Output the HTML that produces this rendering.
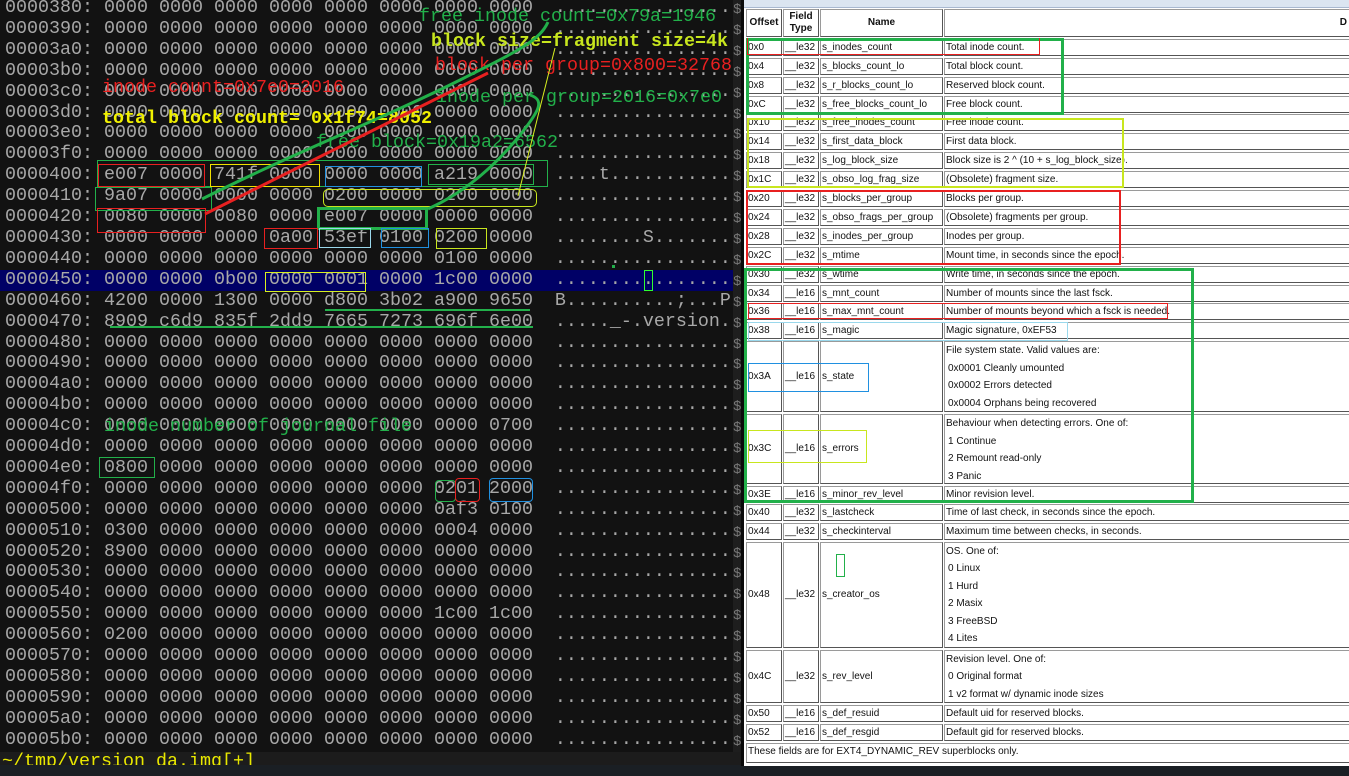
<!DOCTYPE html>
<html><head><meta charset="utf-8">
<style>
*{margin:0;padding:0;box-sizing:border-box}
body{width:1349px;height:776px;overflow:hidden;background:#1a1f24;position:relative;font-family:"Liberation Sans",Arial,sans-serif}
#term{position:absolute;left:0;top:0;width:733px;height:752px;background:#121212;overflow:hidden}
#hex{position:absolute;left:5px;top:-2px;font-family:"Liberation Mono",monospace;font-size:18.33px;line-height:20.9px;color:#a8a8a8;white-space:pre;letter-spacing:0}
.hl{position:absolute;left:0;top:270px;width:733px;height:21px;background:#000066}
#strip{position:absolute;left:733px;top:0;width:8px;height:752px;background:#1e1e1e;color:#777;font-family:"Liberation Mono",monospace;font-size:14px;line-height:20.9px;overflow:hidden}
#status{position:absolute;left:0;top:752px;width:741px;height:13px;background:#1c1c1c;color:#e8e800;font-family:"Liberation Mono",monospace;font-size:18.33px;line-height:20px;padding-left:2px;overflow:hidden}
#right{position:absolute;left:741px;top:0;width:608px;height:766px;background:#fff;border-left:3px solid #0a0a0a;overflow:hidden}
.topbar{position:absolute;left:0;top:0;width:608px;height:8px;background:#dbe5f1;border-bottom:1px solid #a8b8d0}
.row{position:absolute;left:0;width:700px;font-size:10px;color:#111}
.c{position:absolute;top:1px;bottom:1px;border:1px solid #9a9a9a;border-right-color:#555;border-bottom-color:#555;padding-left:1px;line-height:16px;overflow:hidden;white-space:nowrap}
.c1{left:2px;width:36px}.c2{left:39px;width:36px;padding-left:1px}.c3{left:76px;width:123px}.c4{left:200px;width:520px}
.hd .c{font-weight:bold;text-align:center;padding:0;white-space:normal}
.mid{display:flex;align-items:center}
.ln{line-height:17.5px;padding-left:2px}
.b{position:absolute;border-style:solid}
.t{position:absolute;font-family:"Liberation Mono",monospace;font-size:18.33px;white-space:pre;line-height:20px}
</style></head><body>
<div id="term">
<div class="hl"></div>
<div id="hex">0000380: 0000 0000 0000 0000 0000 0000 0000 0000  ................
0000390: 0000 0000 0000 0000 0000 0000 0000 0000  ................
00003a0: 0000 0000 0000 0000 0000 0000 0000 0000  ................
00003b0: 0000 0000 0000 0000 0000 0000 0000 0000  ................
00003c0: 0000 0000 0000 0000 0000 0000 0000 0000  ................
00003d0: 0000 0000 0000 0000 0000 0000 0000 0000  ................
00003e0: 0000 0000 0000 0000 0000 0000 0000 0000  ................
00003f0: 0000 0000 0000 0000 0000 0000 0000 0000  ................
0000400: e007 0000 741f 0000 0000 0000 a219 0000  ....t...........
0000410: 9a07 0000 0000 0000 0200 0000 0200 0000  ................
0000420: 0080 0000 0080 0000 e007 0000 0000 0000  ................
0000430: 0000 0000 0000 0a00 53ef 0100 0200 0000  ........S.......
0000440: 0000 0000 0000 0000 0000 0000 0100 0000  ................
0000450: 0000 0000 0b00 0000 0001 0000 1c00 0000  ................
0000460: 4200 0000 1300 0000 d800 3b02 a900 9650  B..........;...P
0000470: 8909 c6d9 835f 2dd9 7665 7273 696f 6e00  ....._-.version.
0000480: 0000 0000 0000 0000 0000 0000 0000 0000  ................
0000490: 0000 0000 0000 0000 0000 0000 0000 0000  ................
00004a0: 0000 0000 0000 0000 0000 0000 0000 0000  ................
00004b0: 0000 0000 0000 0000 0000 0000 0000 0000  ................
00004c0: 0000 0000 0000 0000 0000 0000 0000 0700  ................
00004d0: 0000 0000 0000 0000 0000 0000 0000 0000  ................
00004e0: 0800 0000 0000 0000 0000 0000 0000 0000  ................
00004f0: 0000 0000 0000 0000 0000 0000 0201 2000  ................
0000500: 0000 0000 0000 0000 0000 0000 0af3 0100  ................
0000510: 0300 0000 0000 0000 0000 0000 0004 0000  ................
0000520: 8900 0000 0000 0000 0000 0000 0000 0000  ................
0000530: 0000 0000 0000 0000 0000 0000 0000 0000  ................
0000540: 0000 0000 0000 0000 0000 0000 0000 0000  ................
0000550: 0000 0000 0000 0000 0000 0000 1c00 1c00  ................
0000560: 0200 0000 0000 0000 0000 0000 0000 0000  ................
0000570: 0000 0000 0000 0000 0000 0000 0000 0000  ................
0000580: 0000 0000 0000 0000 0000 0000 0000 0000  ................
0000590: 0000 0000 0000 0000 0000 0000 0000 0000  ................
00005a0: 0000 0000 0000 0000 0000 0000 0000 0000  ................
00005b0: 0000 0000 0000 0000 0000 0000 0000 0000  ................</div>

<div class="t" style="left:419px;top:7px;color:#22b04a">free inode count=0x79a=1946</div>
<div class="t" style="left:431px;top:32px;color:#c8e61e;font-weight:bold">block size=fragment size=4k</div>
<div class="t" style="left:435px;top:56px;color:#e82020">block per group=0x800=32768</div>
<div class="t" style="left:102px;top:78px;color:#e82020">inode count=0x7e0=2016</div>
<div class="t" style="left:436px;top:88px;color:#22b04a">inode per group=2016=0x7e0</div>
<div class="t" style="left:102px;top:109px;color:#f0f000;font-weight:bold">total block count= 0x1f74=8052</div>
<div class="t" style="left:316px;top:133px;color:#22b04a">free block=0x19a2=6562</div>
<div class="t" style="left:104px;top:417px;color:#22b04a">inode number of journal file</div>

<div class="b" style="left:97px;top:160px;width:451px;height:27px;border-width:1px;border-color:#22b04a"></div>
<div class="b" style="left:98px;top:164px;width:107px;height:23px;border-width:1px;border-color:#e82020"></div>
<div class="b" style="left:210px;top:164px;width:110px;height:23px;border-width:1px;border-color:#f0e000"></div>
<div class="b" style="left:325px;top:166px;width:97px;height:21px;border-width:1px;border-color:#2090e0"></div>
<div class="b" style="left:428px;top:164px;width:106px;height:21px;border-width:1px;border-color:#22b04a"></div>
<div class="b" style="left:95px;top:187px;width:117px;height:24px;border-width:1px;border-color:#22b04a"></div>
<div class="b" style="left:323px;top:189px;width:214px;height:18px;border-width:1px;border-color:#c8e61e;border-radius:5px"></div>
<div class="b" style="left:97px;top:208px;width:109px;height:25px;border-width:1px;border-color:#e82020"></div>
<div class="b" style="left:317px;top:207px;width:111px;height:23px;border-width:3px;border-color:#22b04a"></div>
<div class="b" style="left:264px;top:228px;width:54px;height:21px;border-width:1px;border-color:#e82020"></div>
<div class="b" style="left:319px;top:228px;width:52px;height:20px;border-width:1px;border-color:#9ad8ec"></div>
<div class="b" style="left:381px;top:228px;width:48px;height:20px;border-width:1px;border-color:#2090e0"></div>
<div class="b" style="left:436px;top:228px;width:51px;height:21px;border-width:1px;border-color:#c8e61e"></div>
<div class="b" style="left:265px;top:272px;width:101px;height:20px;border-width:1px;border-color:#d8f020"></div>
<div class="b" style="left:644px;top:270px;width:9px;height:21px;border-width:1px;border-color:#30ff30"></div>
<div class="b" style="left:612px;top:265px;width:3px;height:3px;background:#22b04a;border-width:0"></div>
<div class="b" style="left:325px;top:309px;width:205px;height:0;border-width:2px 0 0;border-color:#22b04a"></div>
<div class="b" style="left:110px;top:326px;width:423px;height:0;border-width:2px 0 0;border-color:#22b04a"></div>
<div class="b" style="left:99px;top:457px;width:56px;height:21px;border-width:1px;border-color:#22b04a"></div>
<div class="b" style="left:435px;top:480px;width:21px;height:22px;border-width:1px;border-color:#22b04a;border-radius:4px"></div>
<div class="b" style="left:455px;top:478px;width:25px;height:24px;border-width:1px;border-color:#e82020;border-radius:4px"></div>
<div class="b" style="left:489px;top:478px;width:44px;height:24px;border-width:1px;border-color:#2090e0;border-radius:4px"></div>

<svg style="position:absolute;left:0;top:0" width="733" height="300">
<path d="M202,199 C300,150 380,120 460,80 C520,50 540,40 548,22" stroke="#22b04a" stroke-width="3" fill="none"/>
<path d="M205,214 L488,73" stroke="#e82020" stroke-width="3" fill="none"/>
<path d="M428,209 C470,190 500,160 520,135 C540,110 545,100 530,95" stroke="#22b04a" stroke-width="3" fill="none"/>
<path d="M555,48 L518,196" stroke="#d8f020" stroke-width="1" fill="none"/>
</svg>
</div>
<div id="strip">$<br>$<br>$<br>$<br>$<br>$<br>$<br>$<br>$<br>$<br>$<br>$<br>$<br>$<br>$<br>$<br>$<br>$<br>$<br>$<br>$<br>$<br>$<br>$<br>$<br>$<br>$<br>$<br>$<br>$<br>$<br>$<br>$<br>$<br>$<br>$</div>
<div id="status">~/tmp/version_da.img[+]</div>

<div id="right">
<div class="topbar"></div>
<div class="row hd" style="top:8px;height:30px"><div class="c c1 mid" style="justify-content:center">Offset</div><div class="c c2" style="line-height:12px;padding-top:1px">Field Type</div><div class="c c3 mid" style="justify-content:center">Name</div><div class="c c4" style="line-height:26px;text-align:right;padding-right:116px">D</div></div>

<div class="row" style="top:38px;height:19px"><div class="c c1">0x0</div><div class="c c2">__le32</div><div class="c c3">s_inodes_count</div><div class="c c4">Total inode count.</div></div>
<div class="row" style="top:57px;height:19px"><div class="c c1">0x4</div><div class="c c2">__le32</div><div class="c c3">s_blocks_count_lo</div><div class="c c4">Total block count.</div></div>
<div class="row" style="top:76px;height:19px"><div class="c c1">0x8</div><div class="c c2">__le32</div><div class="c c3">s_r_blocks_count_lo</div><div class="c c4">Reserved block count.</div></div>
<div class="row" style="top:95px;height:19px"><div class="c c1">0xC</div><div class="c c2">__le32</div><div class="c c3">s_free_blocks_count_lo</div><div class="c c4">Free block count.</div></div>
<div class="row" style="top:113px;height:19px"><div class="c c1">0x10</div><div class="c c2">__le32</div><div class="c c3">s_free_inodes_count</div><div class="c c4">Free inode count.</div></div>
<div class="row" style="top:132px;height:19px"><div class="c c1">0x14</div><div class="c c2">__le32</div><div class="c c3">s_first_data_block</div><div class="c c4">First data block.</div></div>
<div class="row" style="top:151px;height:19px"><div class="c c1">0x18</div><div class="c c2">__le32</div><div class="c c3">s_log_block_size</div><div class="c c4">Block size is 2 ^ (10 + s_log_block_size).</div></div>
<div class="row" style="top:170px;height:19px"><div class="c c1">0x1C</div><div class="c c2">__le32</div><div class="c c3">s_obso_log_frag_size</div><div class="c c4">(Obsolete) fragment size.</div></div>
<div class="row" style="top:189px;height:19px"><div class="c c1">0x20</div><div class="c c2">__le32</div><div class="c c3">s_blocks_per_group</div><div class="c c4">Blocks per group.</div></div>
<div class="row" style="top:208px;height:19px"><div class="c c1">0x24</div><div class="c c2">__le32</div><div class="c c3">s_obso_frags_per_group</div><div class="c c4">(Obsolete) fragments per group.</div></div>
<div class="row" style="top:227px;height:19px"><div class="c c1">0x28</div><div class="c c2">__le32</div><div class="c c3">s_inodes_per_group</div><div class="c c4">Inodes per group.</div></div>
<div class="row" style="top:246px;height:19px"><div class="c c1">0x2C</div><div class="c c2">__le32</div><div class="c c3">s_mtime</div><div class="c c4">Mount time, in seconds since the epoch.</div></div>
<div class="row" style="top:265px;height:19px"><div class="c c1">0x30</div><div class="c c2">__le32</div><div class="c c3">s_wtime</div><div class="c c4">Write time, in seconds since the epoch.</div></div>
<div class="row" style="top:284px;height:19px"><div class="c c1">0x34</div><div class="c c2">__le16</div><div class="c c3">s_mnt_count</div><div class="c c4">Number of mounts since the last fsck.</div></div>
<div class="row" style="top:302px;height:19px"><div class="c c1">0x36</div><div class="c c2">__le16</div><div class="c c3">s_max_mnt_count</div><div class="c c4">Number of mounts beyond which a fsck is needed.</div></div>
<div class="row" style="top:321px;height:19px"><div class="c c1">0x38</div><div class="c c2">__le16</div><div class="c c3">s_magic</div><div class="c c4">Magic signature, 0xEF53</div></div>
<div class="row" style="top:340px;height:73px"><div class="c c1 mid">0x3A</div><div class="c c2 mid">__le16</div><div class="c c3 mid">s_state</div><div class="c c4" style="line-height:17.5px">File system state. Valid values are:<div class="ln">0x0001 Cleanly umounted</div><div class="ln">0x0002 Errors detected</div><div class="ln">0x0004 Orphans being recovered</div></div></div>
<div class="row" style="top:413px;height:72px"><div class="c c1 mid">0x3C</div><div class="c c2 mid">__le16</div><div class="c c3 mid">s_errors</div><div class="c c4" style="line-height:17.5px">Behaviour when detecting errors. One of:<div class="ln">1 Continue</div><div class="ln">2 Remount read-only</div><div class="ln">3 Panic</div></div></div>
<div class="row" style="top:485px;height:19px"><div class="c c1">0x3E</div><div class="c c2">__le16</div><div class="c c3">s_minor_rev_level</div><div class="c c4">Minor revision level.</div></div>
<div class="row" style="top:503px;height:19px"><div class="c c1">0x40</div><div class="c c2">__le32</div><div class="c c3">s_lastcheck</div><div class="c c4">Time of last check, in seconds since the epoch.</div></div>
<div class="row" style="top:522px;height:19px"><div class="c c1">0x44</div><div class="c c2">__le32</div><div class="c c3">s_checkinterval</div><div class="c c4">Maximum time between checks, in seconds.</div></div>
<div class="row" style="top:541px;height:108px"><div class="c c1 mid">0x48</div><div class="c c2 mid">__le32</div><div class="c c3 mid">s_creator_os</div><div class="c c4" style="line-height:17.3px">OS. One of:<div class="ln">0 Linux</div><div class="ln">1 Hurd</div><div class="ln">2 Masix</div><div class="ln">3 FreeBSD</div><div class="ln">4 Lites</div></div></div>
<div class="row" style="top:649px;height:55px"><div class="c c1 mid">0x4C</div><div class="c c2 mid">__le32</div><div class="c c3 mid">s_rev_level</div><div class="c c4" style="line-height:17.3px">Revision level. One of:<div class="ln">0 Original format</div><div class="ln">1 v2 format w/ dynamic inode sizes</div></div></div>
<div class="row" style="top:704px;height:19px"><div class="c c1">0x50</div><div class="c c2">__le16</div><div class="c c3">s_def_resuid</div><div class="c c4">Default uid for reserved blocks.</div></div>
<div class="row" style="top:723px;height:19px"><div class="c c1">0x52</div><div class="c c2">__le16</div><div class="c c3">s_def_resgid</div><div class="c c4">Default gid for reserved blocks.</div></div>
<div class="row" style="top:742px;height:22px"><div class="c" style="left:2px;width:720px">These fields are for EXT4_DYNAMIC_REV superblocks only.</div></div>

<div class="b" style="left:2px;top:38px;width:318px;height:77px;border-width:3px;border-color:#22b04a"></div>
<div class="b" style="left:3px;top:38px;width:293px;height:17px;border-width:1px;border-color:#e82020;border-top:0"></div>
<div class="b" style="left:3px;top:118px;width:377px;height:70px;border-width:2px;border-color:#c8e61e"></div>
<div class="b" style="left:2px;top:190px;width:375px;height:75px;border-width:2px;border-color:#e82020"></div>
<div class="b" style="left:0px;top:268px;width:450px;height:235px;border-width:3px;border-color:#22b04a"></div>
<div class="b" style="left:4px;top:303px;width:420px;height:16px;border-width:1px;border-color:#e82020"></div>
<div class="b" style="left:4px;top:322px;width:320px;height:19px;border-width:1px;border-color:#9ad8ec"></div>
<div class="b" style="left:4px;top:363px;width:121px;height:29px;border-width:1px;border-color:#2090e0"></div>
<div class="b" style="left:4px;top:430px;width:119px;height:33px;border-width:1px;border-color:#c8e61e"></div>
<div class="b" style="left:92px;top:554px;width:9px;height:23px;border-width:1px;border-color:#22b04a"></div>
</div>
</body></html>
